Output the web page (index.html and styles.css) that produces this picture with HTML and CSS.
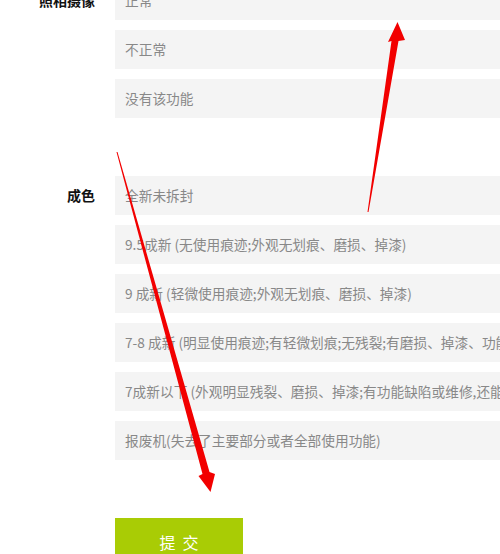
FILE: index.html
```html
<!DOCTYPE html>
<html lang="zh-CN">
<head>
    <meta charset="UTF-8">
    <meta name="viewport" content="width=device-width, initial-scale=1.0">
    <title>回收估价</title>
    <link rel="stylesheet" href="styles.css">
</head>
<body>
    <form class="quote-form">
        <div class="field">
            <div class="field-label">照相摄像</div>
            <div class="options">
                <div class="option">正常</div>
                <div class="option">不正常</div>
                <div class="option">没有该功能</div>
            </div>
        </div>

        <div class="field">
            <div class="field-label">成色</div>
            <div class="options">
                <div class="option">全新未拆封</div>
                <div class="option">9.5成新 (无使用痕迹;外观无划痕、磨损、掉漆)</div>
                <div class="option">9 成新 (轻微使用痕迹;外观无划痕、磨损、掉漆)</div>
                <div class="option">7-8 成新 (明显使用痕迹;有轻微划痕;无残裂;有磨损、掉漆、功能正常)</div>
                <div class="option">7成新以下 (外观明显残裂、磨损、掉漆;有功能缺陷或维修,还能正常使用)</div>
                <div class="option">报废机(失去了主要部分或者全部使用功能)</div>
            </div>
        </div>

        <div class="actions">
            <button type="button" class="submit">提交</button>
        </div>
    </form>

    <svg class="marks" width="500" height="554" viewBox="0 0 500 554">
        <polygon points="367.5,212 391.5,41 388,42 397.5,22 405,40 398.5,41 368.5,212" />
        <polygon points="116.5,152 202.5,474 198.5,476 210.5,492 215,474 209.5,472 117.5,152" />
    </svg>
</body>
</html>
```

FILE: styles.css
```css
html, body {
    margin: 0;
    padding: 0;
    background: #fff;
    overflow: hidden;
}
body {
    position: relative;
    width: 500px;
    height: 554px;
    font-family: "Microsoft YaHei", "Noto Sans CJK SC", sans-serif;
}
.quote-form {
    margin-top: -19px;
}
.field {
    display: grid;
    grid-template-columns: 95px 430px;
    column-gap: 20px;
    margin-bottom: 58px;
}
.field-label {
    text-align: right;
    font-size: 14px;
    font-weight: bold;
    line-height: 39px;
    color: #111;
}
.options {
    display: flex;
    flex-direction: column;
    gap: 10px;
}
.option {
    height: 39px;
    line-height: 39px;
    padding-left: 10px;
    background: #f4f4f4;
    color: #888;
    font-size: 13.7px;
    white-space: nowrap;
    overflow: hidden;
}
.actions {
    padding-left: 115px;
}
.submit {
    width: 128px;
    height: 48px;
    border: none;
    background: #a9cc05;
    color: #fff;
    font-family: inherit;
    font-size: 16px;
    letter-spacing: 7px;
    text-indent: 7px;
    cursor: pointer;
}
.marks {
    position: absolute;
    left: 0;
    top: 0;
    pointer-events: none;
}
.marks polygon {
    fill: #f20000;
}
```
